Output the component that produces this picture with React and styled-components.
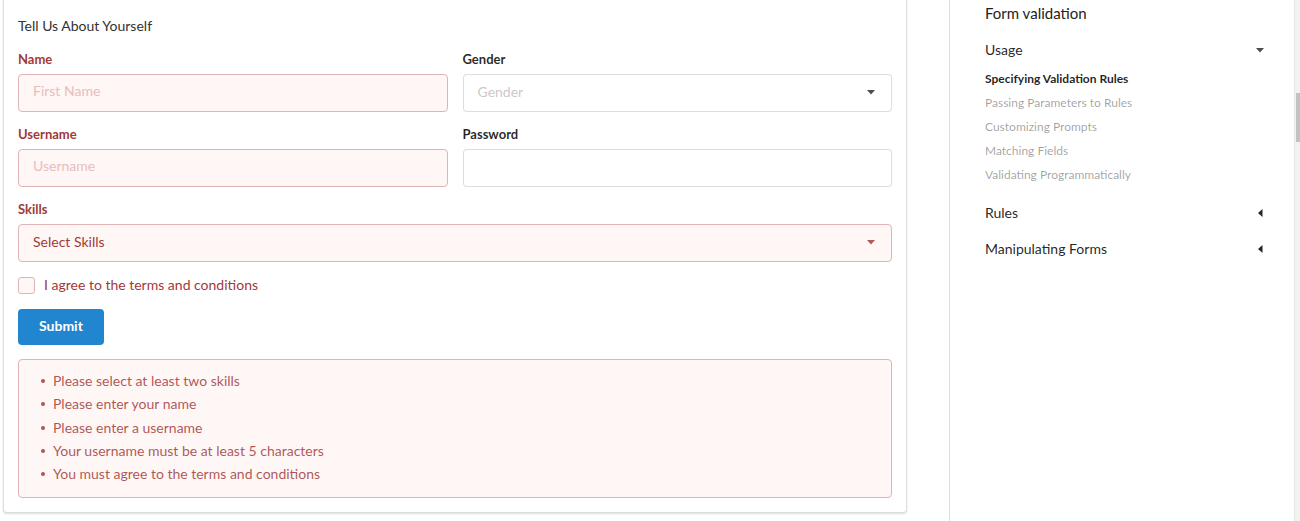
import React from "react";
import styled, { createGlobalStyle } from "styled-components";

const GlobalStyle = createGlobalStyle`
  html, body {
    margin: 0;
    padding: 0;
    background: #fff;
    font-family: Lato, "Helvetica Neue", Arial, sans-serif;
    font-size: 14px;
    color: rgba(0, 0, 0, 0.87);
  }
  * { box-sizing: border-box; }
`;

const Page = styled.div`
  display: flex;
  height: 521px;
  overflow: hidden;
`;

const Main = styled.main`
  flex: 0 0 949px;
  padding: 0 42px 0 3px;
`;

const Card = styled.div`
  margin-top: -7px;
  padding: 22px 14px 14px;
  border: 1px solid rgba(34, 36, 38, 0.15);
  border-radius: 4px;
  box-shadow: 0 1px 2px 0 rgba(34, 36, 38, 0.15);
  background: #fff;
`;

const Heading = styled.h4`
  margin: 0 0 14px;
  font-size: 14px;
  line-height: 20px;
  font-weight: 400;
  color: #333;
`;

const Row = styled.div`
  display: grid;
  grid-template-columns: 1fr 1fr;
  column-gap: 15px;
`;

const Field = styled.div`
  margin-bottom: ${(p) => p.$mb ?? 13}px;
`;

const Label = styled.label`
  display: block;
  margin-bottom: 6px;
  font-size: 13px;
  line-height: 18px;
  font-weight: 700;
  color: ${(p) => (p.$error ? "#9f3a38" : "rgba(0,0,0,.85)")};
`;

const Input = styled.input`
  display: block;
  width: 100%;
  height: 38px;
  margin: 0;
  padding: 7px 14px 12px;
  font-family: inherit;
  font-size: 14px;
  line-height: 17px;
  border-radius: 4px;
  outline: none;
  border: 1px solid ${(p) => (p.$error ? "#e0b4b4" : "rgba(34,36,38,.15)")};
  background: ${(p) => (p.$error ? "#fff6f6" : "#fff")};
  color: ${(p) => (p.$error ? "#9f3a38" : "rgba(0,0,0,.87)")};
  &::placeholder {
    color: ${(p) => (p.$error ? "#e7bdbc" : "rgba(191,191,191,.87)")};
  }
`;

const Select = styled.div`
  display: flex;
  align-items: center;
  justify-content: space-between;
  height: 38px;
  padding: 0 16px 4px 14px;
  font-size: 14px;
  border-radius: 4px;
  border: 1px solid ${(p) => (p.$error ? "#e0b4b4" : "rgba(34,36,38,.15)")};
  background: ${(p) => (p.$error ? "#fff6f6" : "#fff")};
  color: ${(p) => (p.$error ? "#9f3a38" : "rgba(191,191,191,.87)")};
  svg {
    margin-top: 3px;
  }
`;

const CheckRow = styled.label`
  display: flex;
  align-items: center;
  gap: 9px;
  height: 17px;
  margin-bottom: 15px;
  font-size: 14px;
  color: #9f3a38;
`;

const CheckText = styled.span`
  margin-top: -3px;
`;

const Box = styled.span`
  width: 17px;
  height: 17px;
  border-radius: 3px;
  border: 1px solid #e0b4b4;
  background: #fff6f6;
`;

const Button = styled.button`
  display: block;
  margin: 0 0 14px;
  padding: 10px 21px 12px;
  border: none;
  border-radius: 4px;
  background: #2185d0;
  color: #fff;
  font-family: inherit;
  font-size: 14px;
  line-height: 14px;
  font-weight: 700;
`;

const Message = styled.div`
  height: 139px;
  padding: 11px 21px 0 22px;
  border: 1px solid #e0b4b4;
  border-radius: 4px;
  background: #fff6f6;
`;

const ErrorList = styled.ul`
  margin: 0;
  padding: 0;
  list-style: none;
`;

const ErrorItem = styled.li`
  display: flex;
  align-items: center;
  height: 19px;
  margin-bottom: 4.25px;
  font-size: 14px;
  color: rgba(159, 58, 56, 0.85);
  &::before {
    content: "";
    width: 4px;
    height: 4px;
    margin: 1px 8px 0 0;
    border-radius: 50%;
    background: rgba(159, 58, 56, 0.85);
  }
`;

const Sidebar = styled.aside`
  flex: 1;
  border-left: 1px solid #dedede;
  padding: 3px 30px 0 35px;
`;

const Title = styled.div`
  font-size: 15px;
  line-height: 20px;
  color: #222;
  margin-bottom: 17px;
`;

const Section = styled.div`
  margin-bottom: 16px;
`;

const SectionHead = styled.div`
  display: flex;
  align-items: center;
  justify-content: space-between;
  font-size: 14px;
  line-height: 20px;
  color: rgba(0, 0, 0, 0.87);
`;

const SubList = styled.div`
  margin-top: 7px;
`;

const SubItem = styled.div`
  font-size: 12px;
  line-height: 24px;
  font-weight: ${(p) => (p.$active ? 700 : 400)};
  color: ${(p) => (p.$active ? "rgba(0,0,0,.87)" : "rgba(0,0,0,.38)")};
`;

const Track = styled.div`
  flex: 0 0 6px;
  background: #f1f1f1;
  border-left: 1px solid #e8e8e8;
  padding-top: 93px;
`;

const Thumb = styled.div`
  height: 49px;
  margin-left: 1px;
  background: #c1c1c1;
`;

const CaretDown = ({ color = "rgba(0,0,0,.7)" }) => (
  <svg width="8" height="5" viewBox="0 0 8 5">
    <path d="M0 0h8L4 4.5z" fill={color} />
  </svg>
);

const CaretLeft = () => (
  <svg width="5" height="8" viewBox="0 0 5 8" style={{ marginRight: 1 }}>
    <path d="M4.5 0v8L0 4z" fill="rgba(0,0,0,.85)" />
  </svg>
);

const errors = [
  "Please select at least two skills",
  "Please enter your name",
  "Please enter a username",
  "Your username must be at least 5 characters",
  "You must agree to the terms and conditions",
];

const subItems = [
  "Specifying Validation Rules",
  "Passing Parameters to Rules",
  "Customizing Prompts",
  "Matching Fields",
  "Validating Programmatically",
];

export default function App() {
  return (
    <>
      <GlobalStyle />
      <Page>
        <Main>
          <Card>
            <Heading>Tell Us About Yourself</Heading>
            <Row>
              <Field>
                <Label $error>Name</Label>
                <Input $error placeholder="First Name" />
              </Field>
              <Field>
                <Label>Gender</Label>
                <Select>
                  Gender
                  <CaretDown />
                </Select>
              </Field>
            </Row>
            <Row>
              <Field>
                <Label $error>Username</Label>
                <Input $error placeholder="Username" />
              </Field>
              <Field>
                <Label>Password</Label>
                <Input type="password" />
              </Field>
            </Row>
            <Field $mb={15}>
              <Label $error>Skills</Label>
              <Select $error>
                Select Skills
                <CaretDown color="#b25a58" />
              </Select>
            </Field>
            <CheckRow>
              <Box />
              <CheckText>I agree to the terms and conditions</CheckText>
            </CheckRow>
            <Button>Submit</Button>
            <Message>
              <ErrorList>
                {errors.map((e) => (
                  <ErrorItem key={e}>{e}</ErrorItem>
                ))}
              </ErrorList>
            </Message>
          </Card>
        </Main>
        <Sidebar>
          <Title>Form validation</Title>
          <Section>
            <SectionHead>
              Usage
              <CaretDown />
            </SectionHead>
            <SubList>
              {subItems.map((s, i) => (
                <SubItem key={s} $active={i === 0}>
                  {s}
                </SubItem>
              ))}
            </SubList>
          </Section>
          <Section>
            <SectionHead>
              Rules
              <CaretLeft />
            </SectionHead>
          </Section>
          <Section>
            <SectionHead>
              Manipulating Forms
              <CaretLeft />
            </SectionHead>
          </Section>
        </Sidebar>
        <Track>
          <Thumb />
        </Track>
      </Page>
    </>
  );
}
